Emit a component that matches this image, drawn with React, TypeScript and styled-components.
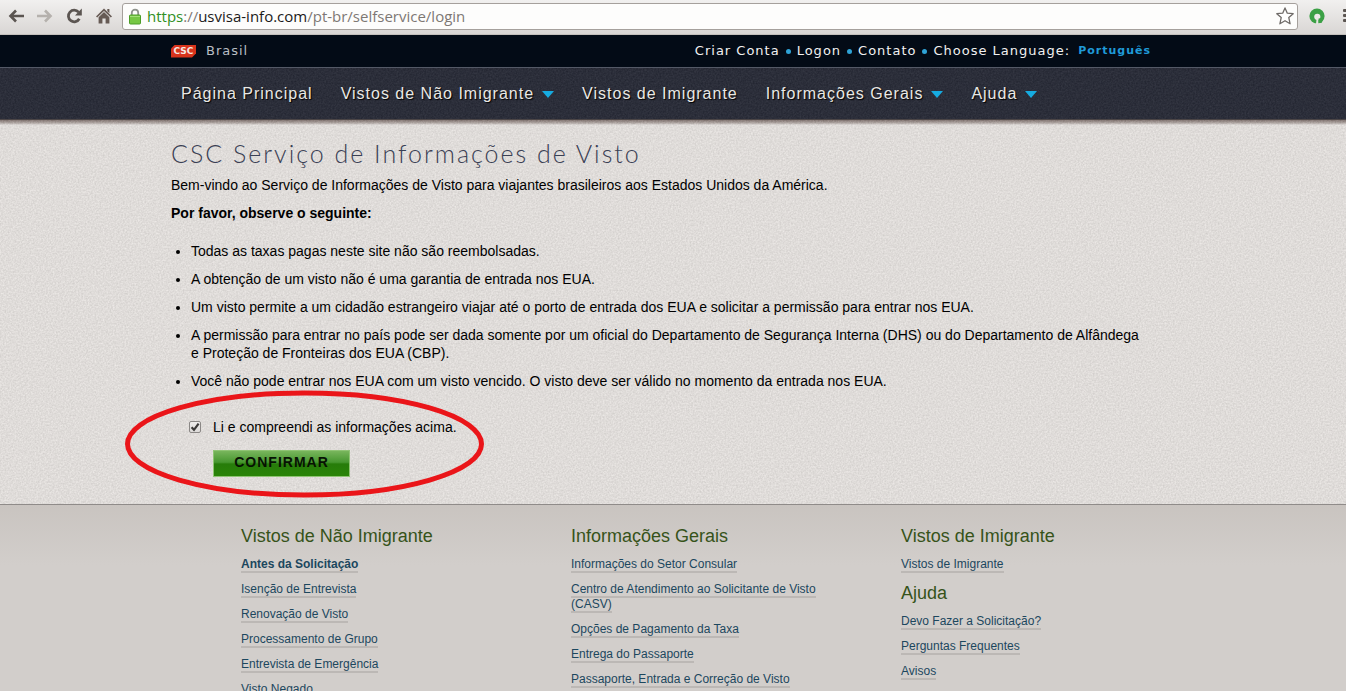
import React from "react";
import styled, { createGlobalStyle } from "styled-components";

const GlobalStyle = createGlobalStyle`
  * { box-sizing: border-box; }
  body {
    margin: 0;
    background: #d2cecb;
    font-family: "Liberation Sans", Arial, sans-serif;
    color: #000;
  }
  a { color: inherit; text-decoration: none; }
  ul { margin: 0; padding: 0; }
`;

const BrowserWindow = styled.div`
  display: flex;
  flex-direction: column;
  height: 100vh;
  overflow: hidden;
`;

/* Browser toolbar */
const Toolbar = styled.div`
  flex: none;
  display: flex;
  align-items: center;
  height: 35px;
  padding: 0 0 2px 8px;
  overflow: hidden;
  background: linear-gradient(#f1f0ef, #d9d6d4);
  border-bottom: 1px solid #c4c0bc;
`;

const ToolButton = styled.button<{ $gap: number }>`
  flex: none;
  display: flex;
  margin: 0 ${(p) => p.$gap}px 0 0;
  padding: 0;
  border: 0;
  background: none;
`;

const AddressBar = styled.div`
  flex: 1;
  display: flex;
  align-items: center;
  height: 27px;
  padding: 0 3px 0 5px;
  background: #fdfdfc;
  border: 1px solid #a5a09c;
  border-radius: 3px;
`;

const Address = styled.a`
  flex: 1;
  margin-left: 5px;
  font: 15px/24px "Open Sans", "Noto Sans", sans-serif;
  white-space: nowrap;
  color: #7d7874;
`;
const Secure = styled.span`color: #2f8f22;`;
const Host = styled.span`color: #1b1a19;`;

const Extensions = styled.div`
  flex: none;
  display: flex;
  align-items: center;
  width: 48px;
  padding-left: 11px;
  overflow: hidden;
`;

/* Site */
const Site = styled.div`
  flex: 1;
  min-height: 0;
  overflow: hidden;
  background: #d2cecb;
`;

const Wrap = styled.div`
  max-width: 1004px;
  margin: 0 auto;
`;

const TopBar = styled.div`
  background: #030b16;
  border-bottom: 1px solid #545966;
`;

const TopRow = styled(Wrap)`
  display: flex;
  align-items: center;
  justify-content: space-between;
  height: 32px;
  padding-right: 24px;
  font: 13px/16px "DejaVu Sans", Verdana, sans-serif;
  letter-spacing: 1px;
`;

const Brand = styled.a`
  display: flex;
  align-items: center;
  gap: 10px;
  color: #b9bec4;
`;

const BrandBadge = styled.span`
  width: 25px;
  height: 13px;
  background: #d8341c;
  clip-path: polygon(4px 0, 100% 0, 100% 9px, 21px 100%, 0 100%, 0 4px);
  color: #f5e9e4;
  font: bold 9px/13px "DejaVu Sans", Verdana, sans-serif;
  letter-spacing: 0;
  text-align: center;
`;

const AccountNav = styled.nav`
  display: flex;
  align-items: center;
  gap: 6px;
  color: #f1f1f1;
`;
const Dot = styled.i`
  width: 5px;
  height: 5px;
  border-radius: 50%;
  background: #2fa3d6;
`;
const Language = styled.a`
  margin-left: 2px;
  font-weight: bold;
  font-size: 11px;
  color: #1f9ad8;
`;

const Textured = styled.div`
  position: relative;
  isolation: isolate;
`;

const Grain = styled.svg<{ $strength: number }>`
  position: absolute;
  inset: 0;
  z-index: -1;
  width: 100%;
  height: 100%;
  opacity: ${(p) => p.$strength};
`;

const NavBar = styled(Textured)`
  background: #222532;
  border-bottom: 1px solid #4b4546;
`;

const NavRow = styled(Wrap).attrs({ as: "nav" })`
  display: flex;
  align-items: center;
  gap: 28px;
  height: 51px;
  padding-left: 10px;
`;

const NavLink = styled.a`
  display: flex;
  align-items: center;
  gap: 8px;
  font-size: 16px;
  line-height: 20px;
  letter-spacing: 1px;
  white-space: nowrap;
  color: #e9e8e4;
  text-shadow: 1px 1px 1px #000;
`;
const Caret = styled.i`
  margin-top: 2px;
  border: 6px solid transparent;
  border-top: 7px solid #16abe0;
  border-bottom: 0;
`;

const Main = styled(Textured)`
  background: linear-gradient(#82736f 0, #b8aeaa 3px, #f0ece9 5px, #f0ece9 100%);
  border-bottom: 1px solid #8f8b89;
`;

const Content = styled(Wrap).attrs({ as: "main" })`
  padding: 18px 0 27px;
  font-size: 14px;
  line-height: 18px;
`;

const Title = styled.h1`
  margin: 0 0 8px;
  font: 300 25px/30px Lato, "Century Gothic", sans-serif;
  letter-spacing: 2px;
  color: #3a4054;
`;

const Paragraph = styled.p<{ $strong?: boolean }>`
  margin: 0 0 10px;
  font-weight: ${(p) => (p.$strong ? "bold" : "normal")};
`;

const Notices = styled.ul`
  display: flex;
  flex-direction: column;
  gap: 10px;
  padding: 10px 26px 0 20px;
`;

const Form = styled.form`
  position: relative;
  display: flex;
  flex-direction: column;
  align-items: flex-start;
  gap: 14px;
  padding: 28px 0 0 18px;
`;

const Agreement = styled.label`
  display: flex;
  align-items: center;
  gap: 12px;
`;
const Tick = styled.span`
  display: grid;
  > * { grid-area: 1 / 1; }
  > svg { pointer-events: none; }
`;
const Checkbox = styled.input`
  appearance: none;
  width: 12px;
  height: 12px;
  margin: 0;
  border: 1px solid #8b8886;
  border-radius: 2px;
  background: linear-gradient(#efedec, #dcdad8);
`;

const Confirm = styled.button`
  margin-left: 24px;
  width: 137px;
  height: 27px;
  padding: 0 0 4px;
  border: 1px solid #8fc474;
  background: linear-gradient(#78b55c 0, #479730 45%, #277c0a 52%, #2a8408 100%);
  font: bold 14px/18px "Liberation Sans", Arial, sans-serif;
  letter-spacing: 1px;
  color: #071203;
`;

const Highlight = styled.svg`
  position: absolute;
  left: -46px;
  top: 0;
  pointer-events: none;
`;

const Footer = styled.footer`
  background: linear-gradient(#c9c4c0, #d2cecb 60px);
`;
const FooterRow = styled(Wrap)`
  display: grid;
  grid-template-columns: repeat(3, 260px);
  column-gap: 70px;
  padding: 20px 0 20px 70px;
`;
const FooterTitle = styled.h2`
  margin: 0 0 10px;
  font-size: 18px;
  line-height: 22px;
  font-weight: normal;
  color: #36531a;
`;
const FooterList = styled.ul`
  display: flex;
  flex-direction: column;
  gap: 10px;
  margin-bottom: 10px;
  list-style: none;
  font-size: 12px;
  line-height: 15px;
`;
const FooterLink = styled.a<{ $strong?: boolean }>`
  border-bottom: 2px solid #bcb8b5;
  color: #1c475e;
  font-weight: ${(p) => (p.$strong ? "bold" : "normal")};
`;

const navItems = [
  { label: "Página Principal" },
  { label: "Vistos de Não Imigrante", menu: true },
  { label: "Vistos de Imigrante" },
  { label: "Informações Gerais", menu: true },
  { label: "Ajuda", menu: true },
];

const notices = [
  "Todas as taxas pagas neste site não são reembolsadas.",
  "A obtenção de um visto não é uma garantia de entrada nos EUA.",
  "Um visto permite a um cidadão estrangeiro viajar até o porto de entrada dos EUA e solicitar a permissão para entrar nos EUA.",
  "A permissão para entrar no país pode ser dada somente por um oficial do Departamento de Segurança Interna (DHS) ou do Departamento de Alfândega e Proteção de Fronteiras dos EUA (CBP).",
  "Você não pode entrar nos EUA com um visto vencido. O visto deve ser válido no momento da entrada nos EUA.",
];

const footerColumns = [
  [
    {
      title: "Vistos de Não Imigrante",
      links: ["Antes da Solicitação", "Isenção de Entrevista", "Renovação de Visto", "Processamento de Grupo", "Entrevista de Emergência", "Visto Negado"],
    },
  ],
  [
    {
      title: "Informações Gerais",
      links: ["Informações do Setor Consular", "Centro de Atendimento ao Solicitante de Visto (CASV)", "Opções de Pagamento da Taxa", "Entrega do Passaporte", "Passaporte, Entrada e Correção de Visto"],
    },
  ],
  [
    { title: "Vistos de Imigrante", links: ["Vistos de Imigrante"] },
    { title: "Ajuda", links: ["Devo Fazer a Solicitação?", "Perguntas Frequentes", "Avisos"] },
  ],
];

function Texture({ id, strength }: { id: string; strength: number }) {
  return (
    <Grain $strength={strength} aria-hidden="true">
      <filter id={id} x="0" y="0" width="100%" height="100%" colorInterpolationFilters="sRGB">
        <feTurbulence type="fractalNoise" baseFrequency="0.6" numOctaves="2" />
        <feColorMatrix type="matrix" values="1 0 0 0 0  1 0 0 0 0  1 0 0 0 0  0 0 0 0 1" />
      </filter>
      <rect width="100%" height="100%" filter={`url(#${id})`} />
    </Grain>
  );
}

function BrowserToolbar() {
  return (
    <Toolbar>
      <ToolButton $gap={13} aria-label="Voltar">
        <svg width="16" height="16" viewBox="0 0 16 16" fill="none" stroke="#5b5551" strokeWidth="2.6">
          <path d="M8 2.5 2.5 8 8 13.5M2.5 8H16" />
        </svg>
      </ToolButton>
      <ToolButton $gap={13} aria-label="Avançar">
        <svg width="16" height="16" viewBox="0 0 16 16" fill="none" stroke="#b5b1ad" strokeWidth="2.6">
          <path d="M8 2.5 13.5 8 8 13.5M13.5 8H0" />
        </svg>
      </ToolButton>
      <ToolButton $gap={13} aria-label="Recarregar">
        <svg width="17" height="16" viewBox="0 0 17 16">
          <path d="M12.6 4.2A5.8 5.8 0 1 0 13.3 10.8" fill="none" stroke="#5b5551" strokeWidth="2.8" />
          <path d="M15.8 0.6V7.4H9z" fill="#5b5551" />
        </svg>
      </ToolButton>
      <ToolButton $gap={10} aria-label="Início">
        <svg width="16" height="16" viewBox="0 0 16 16" fill="#665a54">
          <path d="M8 0.5 16 8.4 14.8 9.4 8 2.9 1.2 9.4 0 8.4z" />
          <path d="M11.3 1H13.4V5.2L11.3 3.2zM2.6 9.2 8 4.1 13.4 9.2V15.6H9.6V10.6H6.4V15.6H2.6z" />
        </svg>
      </ToolButton>
      <AddressBar>
        <svg width="14" height="17" viewBox="0 0 14 17">
          <path d="M3.8 8V4.8a3.2 3.2 0 0 1 6.4 0V8" fill="none" stroke="#8f938c" strokeWidth="1.8" />
          <rect x="1.5" y="7" width="11" height="9" rx="1" fill="#76c744" stroke="#4c9d28" />
          <path d="M2 8.5h10" stroke="#a2df78" />
        </svg>
        <Address href="#">
          <Secure>https</Secure>://<Host>usvisa-info.com</Host>/pt-br/selfservice/login
        </Address>
        <ToolButton $gap={0} aria-label="Favoritos">
          <svg width="18" height="18" viewBox="0 0 18 18" fill="#fff" stroke="#6f6b68" strokeWidth="1.3" strokeLinejoin="round">
            <path d="M9 .9 11.3 6.2 17.2 6.7 12.8 10.6 14.1 16.8 9 13.7 3.9 16.8 5.2 10.6.8 6.7 6.7 6.2z" />
          </svg>
        </ToolButton>
      </AddressBar>
      <Extensions>
        <ToolButton $gap={17} aria-label="Extensão">
          <svg width="16" height="16" viewBox="0 0 16 16">
            <circle cx="8" cy="8" r="7.6" fill="#3ba045" />
            <circle cx="8.3" cy="8.8" r="3.1" fill="#eceae8" />
            <path d="M7.6 10.5 9.4 10.8V16H7z" fill="#e6e4e2" />
            <path d="M9.6 10.5 14.4 10 12.6 15H9.8z" fill="#3ba045" />
          </svg>
        </ToolButton>
        <ToolButton $gap={0} aria-label="Menu">
          <svg width="16" height="14" viewBox="0 0 16 14" fill="#5b5551">
            <rect x="1" width="15" height="3" rx="1" />
            <rect x="1" y="5" width="15" height="3" rx="1" />
            <rect x="1" y="10" width="15" height="3" rx="1" />
          </svg>
        </ToolButton>
      </Extensions>
    </Toolbar>
  );
}

export default function App() {
  return (
    <BrowserWindow>
      <GlobalStyle />
      <BrowserToolbar />
      <Site>
        <TopBar>
          <TopRow>
            <Brand href="#">
              <BrandBadge>CSC</BrandBadge>
              Brasil
            </Brand>
            <AccountNav>
              <a href="#">Criar Conta</a>
              <Dot />
              <a href="#">Logon</a>
              <Dot />
              <a href="#">Contato</a>
              <Dot />
              <span>Choose Language:</span>
              <Language href="#">Português</Language>
            </AccountNav>
          </TopRow>
        </TopBar>
        <NavBar>
          <Texture id="grain-dark" strength={0.1} />
          <NavRow>
            {navItems.map((item) => (
              <NavLink href="#" key={item.label}>
                {item.label}
                {item.menu && <Caret />}
              </NavLink>
            ))}
          </NavRow>
        </NavBar>
        <Main>
          <Texture id="grain-light" strength={0.14} />
          <Content>
            <Title>CSC Serviço de Informações de Visto</Title>
            <Paragraph>Bem-vindo ao Serviço de Informações de Visto para viajantes brasileiros aos Estados Unidos da América.</Paragraph>
            <Paragraph $strong>Por favor, observe o seguinte:</Paragraph>
            <Notices>
              {notices.map((text) => (
                <li key={text}>{text}</li>
              ))}
            </Notices>
            <Form onSubmit={(e) => e.preventDefault()}>
              <Agreement>
                <Tick>
                  <Checkbox type="checkbox" defaultChecked />
                  <svg width="12" height="12" viewBox="0 0 12 12" fill="none" stroke="#3c3a39" strokeWidth="2.2">
                    <path d="M2.6 6.2 5 8.8 9.6 2.6" />
                  </svg>
                </Tick>
                Li e compreendi as informações acima.
              </Agreement>
              <Confirm type="submit">CONFIRMAR</Confirm>
              <Highlight width="360" height="108" viewBox="0 0 360 108" aria-hidden="true">
                <ellipse cx="179.5" cy="54" rx="177" ry="51" fill="none" stroke="#ea1519" strokeWidth="5" />
              </Highlight>
            </Form>
          </Content>
        </Main>
        <Footer>
          <FooterRow>
            {footerColumns.map((sections, i) => (
              <div key={i}>
                {sections.map((section) => (
                  <section key={section.title}>
                    <FooterTitle>{section.title}</FooterTitle>
                    <FooterList>
                      {section.links.map((link) => (
                        <li key={link}>
                          <FooterLink href="#" $strong={link === "Antes da Solicitação"}>
                            {link}
                          </FooterLink>
                        </li>
                      ))}
                    </FooterList>
                  </section>
                ))}
              </div>
            ))}
          </FooterRow>
        </Footer>
      </Site>
    </BrowserWindow>
  );
}
